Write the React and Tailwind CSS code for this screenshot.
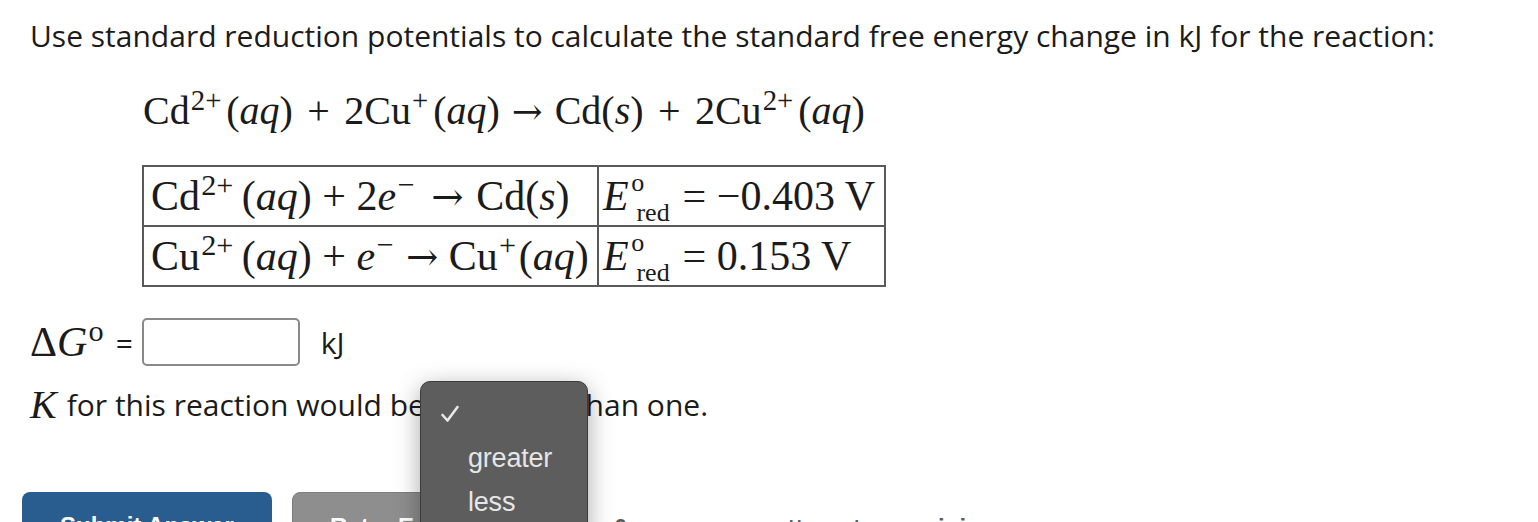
import React from "react";

const serif = { fontFamily: '"Liberation Serif", "DejaVu Serif", serif' };
const arrowFont = { fontFamily: '"DejaVu Serif", serif' };

function Sp({ w = "0.36em" }) {
  return <span className="inline-block" style={{ width: w }} />;
}

function Sup({ children }) {
  return <span className="relative -top-[0.5em] text-[0.72em] leading-none ml-[0.04em]">{children}</span>;
}

function Arrow() {
  return (
    <span className="text-[0.92em]" style={arrowFont}>
      →
    </span>
  );
}

function Ered() {
  return (
    <span className="whitespace-nowrap">
      <span className="italic">E</span>
      <span className="relative inline-block w-[1.75em] h-[0.7em] text-[0.62em] leading-none">
        <span className="absolute left-[0.1em] -top-[0.85em]">o</span>
        <span className="absolute left-[0.3em] top-[0.3em]">red</span>
      </span>
    </span>
  );
}

function Check() {
  return (
    <svg width="20" height="20" viewBox="0 0 20 20" fill="none">
      <path d="M2.5 11 L7.5 16.5 L17.5 3" stroke="#e8e8e8" strokeWidth="2.6" strokeLinecap="round" strokeLinejoin="round" />
    </svg>
  );
}

export default function App() {
  return (
    <div
      className="relative w-[1538px] h-[522px] overflow-hidden bg-white text-[#1b1b1b]"
      style={{ fontFamily: '"Open Sans", "Noto Sans", sans-serif' }}
    >
      <div className="pl-[30px]">
        <div className="pt-[16px] h-[56px] text-[30px] leading-[40px] whitespace-nowrap">
          Use standard reduction potentials to calculate the standard free energy change in kJ for the reaction:
        </div>

        <div className="mt-[30px] ml-[113px] h-[50px] text-[40px] leading-[50px] whitespace-nowrap" style={serif}>
          Cd<Sup>2+</Sup>
          <Sp w="0.12em" />(<span className="italic">aq</span>)<Sp />+<Sp />2Cu<Sup>+</Sup>
          <Sp w="0.12em" />(<span className="italic">aq</span>)<Sp w="0.3em" /><Arrow /><Sp w="0.3em" />Cd(<span className="italic">s</span>)<Sp />+<Sp />2Cu<Sup>2+</Sup>
          <Sp w="0.12em" />(<span className="italic">aq</span>)
        </div>

        <table className="mt-[29px] ml-[112px] border-collapse text-[42px] leading-none" style={serif}>
          <tbody>
            <tr>
              <td className="border-2 border-[#5a5a5a] w-[455px] h-[60px] p-0 pl-[7px] align-middle whitespace-nowrap">
                Cd<Sup>2+</Sup>
                <Sp w="0.2em" />(<span className="italic">aq</span>)<Sp w="0.25em" />+<Sp w="0.25em" />2<span className="italic">e</span><Sup>−</Sup>
                <Sp w="0.4em" /><Arrow /><Sp w="0.3em" />Cd(<span className="italic">s</span>)
              </td>
              <td className="border-2 border-[#5a5a5a] w-[287px] h-[60px] p-0 pl-[4px] align-middle whitespace-nowrap">
                <Ered />
                <Sp w="0.2em" />=<Sp w="0.25em" />−0.403 V
              </td>
            </tr>
            <tr>
              <td className="border-2 border-[#5a5a5a] h-[60px] p-0 pl-[7px] align-middle whitespace-nowrap">
                Cu<Sup>2+</Sup>
                <Sp w="0.2em" />(<span className="italic">aq</span>)<Sp w="0.25em" />+<Sp w="0.25em" /><span className="italic">e</span><Sup>−</Sup>
                <Sp w="0.3em" /><Arrow /><Sp w="0.25em" />Cu<Sup>+</Sup>
                <Sp w="0.06em" />(<span className="italic">aq</span>)
              </td>
              <td className="border-2 border-[#5a5a5a] h-[60px] p-0 pl-[4px] align-middle whitespace-nowrap">
                <Ered />
                <Sp w="0.2em" />=<Sp w="0.25em" />0.153 V
              </td>
            </tr>
          </tbody>
        </table>

        <div className="mt-[31px] flex items-center h-[48px]">
          <span className="text-[42px] leading-none whitespace-nowrap" style={serif}>
            Δ<span className="italic">G</span>
            <Sup>o</Sup>
          </span>
          <span className="ml-[12px] text-[30px]">=</span>
          <div className="ml-[9px] w-[158px] h-[48px] border-2 border-[#8a8a8a] rounded-[5px] bg-white" />
          <span className="ml-[21px] text-[30px]">kJ</span>
        </div>

        <div className="mt-[19px] h-[40px] flex items-center text-[30px] leading-[40px] whitespace-nowrap">
          <span className="text-[40px] italic mr-[10px]" style={serif}>K</span>
          <span>for this reaction would be</span>
          <span className="inline-block w-[150px]" />
          <span>than one.</span>
        </div>

        <div className="mt-[67px] -ml-[8px] flex items-start gap-[20px]">
          <div
            className="w-[250px] h-[60px] rounded-[8px] bg-[#2a5d8f] text-white text-[24px] font-bold pt-[16px] pl-[38px] whitespace-nowrap"
            style={{ fontFamily: '"Liberation Sans", Arial, sans-serif' }}
          >
            Submit Answer
          </div>
          <div
            className="w-[260px] h-[60px] rounded-[8px] bg-[#8e8e8e] border border-[#7d7d7d] text-white text-[24px] font-bold pt-[16px] pl-[37px] whitespace-nowrap"
            style={{ fontFamily: '"Liberation Sans", Arial, sans-serif' }}
          >
            Retry Entire Group
          </div>
          <div
            className="ml-[42px] pt-[18px] text-[24px] font-bold text-[#5b5b5b] whitespace-nowrap"
            style={{ fontFamily: '"Liberation Sans", Arial, sans-serif' }}
          >
            0 more group attempts remaining
          </div>
        </div>
      </div>

      <div
        className="absolute left-[420px] top-[381px] w-[168px] h-[160px] rounded-[10px] bg-[#5d5d5d] border border-[#3c3c3c] shadow-[0_6px_24px_rgba(0,0,0,0.35)]"
        style={{ fontFamily: '"Liberation Sans", Arial, sans-serif' }}
      >
        <div className="absolute left-[19px] top-[22px]">
          <Check />
        </div>
        <div className="absolute left-[47px] top-[60px] text-[27px] leading-[32px] text-[#e6e6e6] tracking-[-0.2px]">greater</div>
        <div className="absolute left-[47px] top-[104px] text-[27px] leading-[32px] text-[#e6e6e6] tracking-[-0.2px]">less</div>
      </div>
    </div>
  );
}
